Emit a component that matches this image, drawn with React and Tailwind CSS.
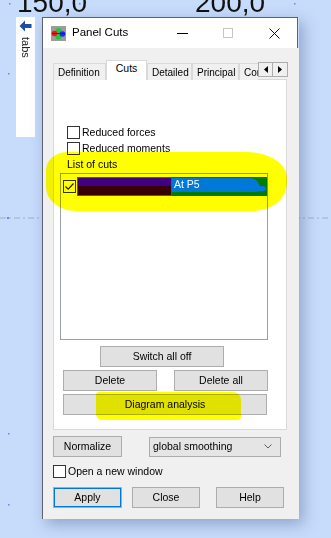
import React from "react";

const Box = ({ checked, clear }) => (
  <span
    className={`w-[13px] h-[13px] shrink-0 border border-[#333] flex items-center justify-center ${clear ? "bg-transparent" : "bg-white"}`}
  >
    {checked && (
      <svg width="11" height="11" viewBox="0 0 11 11">
        <path d="M1.5 5.5 4.2 8.2 9.5 2.5" fill="none" stroke="#222" strokeWidth="1.2" />
      </svg>
    )}
  </span>
);

const Btn = ({ children, className = "" }) => (
  <div
    className={`h-[21px] flex items-center justify-center bg-[#e1e1e1] border border-[#adadad] text-[10.5px] ${className}`}
  >
    {children}
  </div>
);

const Tab = ({ children, active, w }) =>
  active ? (
    <div
      className={`relative z-10 h-[20px] ${w} shrink-0 bg-white border border-b-0 border-[#d9d9d9] flex items-center justify-center pb-[3px] text-[10.5px]`}
    >
      {children}
    </div>
  ) : (
    <div
      className={`h-[17px] ${w} shrink-0 bg-[#f0f0f0] border border-b-0 border-[#d9d9d9] flex items-center pl-[4px] text-[10px] whitespace-nowrap overflow-hidden`}
    >
      {children}
    </div>
  );

export default function App() {
  const dots = [
    [9, 3], [79, 3], [238, 3], [294, 3],
    [8, 73], [8, 433], [8, 504],
  ];

  return (
    <div className="relative w-[331px] h-[538px] overflow-hidden bg-[#c7dbfb] font-['Liberation_Sans',Arial,sans-serif] text-black">
      {/* canvas grid */}
      <svg className="absolute inset-0" width="331" height="538">
        {dots.map(([x, y], i) => (
          <rect key={i} x={x} y={y} width="1.5" height="1.5" fill="#6f80f0" />
        ))}
        <line x1="0" y1="218" x2="331" y2="218" stroke="#a3adc2" strokeWidth="1" strokeDasharray="6 3 2 3" />
        <rect x="7" y="217" width="2" height="2" fill="#6f80f0" />
      </svg>

      {/* axis labels */}
      <div className="absolute left-[17px] top-[-11px] text-[28px] leading-none text-[#111]">150,0</div>
      <div className="absolute left-[195px] top-[-11px] text-[28px] leading-none text-[#111]">200,0</div>

      {/* tabs sidebar */}
      <div className="absolute left-[16px] top-[17px] w-[19px] h-[120px] bg-white flex flex-col items-center pt-[3px]">
        <svg width="13" height="12" viewBox="0 0 13 12">
          <path d="M0.5 6 6 0.5V4H12.5V8H6V11.5Z" fill="#1c4ea3" />
        </svg>
        <span className="[writing-mode:vertical-rl] text-[11px] leading-none mt-[5px] text-[#222]">tabs</span>
      </div>

      {/* dialog window */}
      <div className="absolute left-[42px] top-[17px] flex flex-col shadow-[4px_5px_14px_rgba(40,60,110,0.35)]">
        {/* title bar */}
        <div className="w-[256px] h-[31px] bg-white border-l border-t border-r border-[#5d6170] flex items-center">
          <svg className="ml-[8px]" width="15" height="15" viewBox="0 0 15 15">
            <rect width="15" height="15" fill="#9c9c9c" />
            <circle cx="7.5" cy="5" r="3" fill="#27c43a" />
            <circle cx="7.5" cy="10.5" r="3" fill="#27c43a" />
            <circle cx="3.5" cy="7.5" r="2.8" fill="#e81818" />
            <circle cx="11.5" cy="8" r="2.8" fill="#1a2fe0" />
            <path d="M1 7.5H14" stroke="#222" strokeWidth="0.8" />
          </svg>
          <span className="ml-[6px] text-[11.5px] text-black">Panel Cuts</span>
          <div className="ml-auto flex h-full">
            <div className="w-[46px] flex items-center justify-center">
              <span className="w-[11px] h-px bg-black" />
            </div>
            <div className="w-[46px] flex items-center justify-center">
              <span className="w-[10px] h-[10px] border border-[#c6c6c6]" />
            </div>
            <div className="w-[46px] flex items-center justify-center">
              <svg width="11" height="11" viewBox="0 0 11 11">
                <path d="M0.5 0.5 10.5 10.5M10.5 0.5 0.5 10.5" stroke="#111" strokeWidth="1" />
              </svg>
            </div>
          </div>
        </div>

        {/* content */}
        <div className="w-[257px] h-[471px] bg-[#f0f0f0] border-l border-[#5d6170] pl-[10px] pt-[12px]">
          {/* tab row */}
          <div className="flex items-end -mb-px relative z-10">
            <div className="w-[205px] flex items-end overflow-hidden">
              <Tab w="w-[53px]">Definition</Tab>
              <Tab w="w-[41px]" active>Cuts</Tab>
              <Tab w="w-[45px]">Detailed</Tab>
              <Tab w="w-[47px]">Principal</Tab>
              <Tab w="w-[40px]">Combinations</Tab>
            </div>
            <div className="self-start mt-[2px] flex">
              <div className="w-[15px] h-[15px] bg-[#f0f0f0] border border-[#adadad] flex items-center justify-center">
                <svg width="4" height="7" viewBox="0 0 4 7"><path d="M4 0V7L0 3.5Z" fill="#000" /></svg>
              </div>
              <div className="w-[15px] h-[15px] bg-[#f0f0f0] border border-l-0 border-[#adadad] flex items-center justify-center">
                <svg width="4" height="7" viewBox="0 0 4 7"><path d="M0 0V7L4 3.5Z" fill="#000" /></svg>
              </div>
            </div>
          </div>

          {/* tab panel */}
          <div className="relative w-[234px] h-[351px] bg-white border border-[#d9d9d9] pl-[6px] pt-[46px]">
            <div className="flex flex-col gap-[3px] pl-[7px]">
              <div className="flex items-center gap-[2px] h-[13px]">
                <Box />
                <span className="text-[10.5px] leading-none">Reduced forces</span>
              </div>
              <div className="flex items-center gap-[2px] h-[13px]">
                <Box />
                <span className="text-[10.5px] leading-none">Reduced moments</span>
              </div>
            </div>
            <div className="pl-[7px] mt-[3px] h-[15px] text-[10.5px] leading-[12px]">List of cuts</div>

            {/* highlight over the list */}
            <div className="absolute left-[-8px] top-[72px] w-[241px] h-[59px] bg-[#ffff00] mix-blend-multiply rounded-[22px_40px_34px_30px/18px_26px_28px_24px]" />

            {/* list box */}
            <div className="w-[208px] h-[167px] border border-[#9aa0a8] pt-[2px] pl-[2px]">
              <div className="flex items-center h-[20px]">
                <Box checked clear />
                <div className="relative ml-[1px] w-[96px] h-[19px] flex flex-col border border-[#555]">
                  <div className="flex-1 bg-[#400083]" />
                  <div className="flex-1 bg-[#3a0008]" />
                </div>
                <div className="relative w-[96px] h-[19px] bg-[#007d00]">
                  <div className="absolute left-0 top-[1px] w-[88px] h-[14px] bg-[#0078d7] rounded-r-[10px] rounded-br-[4px]" />
                  <div className="absolute left-[60px] top-[9px] w-[34px] h-[5px] bg-[#0078d7] rounded-[3px]" />
                  <span className="absolute left-[2px] top-[1px] text-[10.5px] leading-[12px] text-white">At P5</span>
                </div>
              </div>
            </div>

            <Btn className="w-[124px] ml-[40px] mt-[6px]">Switch all off</Btn>
            <div className="flex mt-[3px] ml-[3px] gap-[17px]">
              <Btn className="w-[94px]">Delete</Btn>
              <Btn className="w-[94px]">Delete all</Btn>
            </div>
            <div className="relative mt-[3px] ml-[3px] w-[204px]">
              <Btn className="w-[204px]">
                <span className="relative z-10">Diagram analysis</span>
              </Btn>
            </div>
            {/* highlight over the button */}
            <div className="absolute left-[42px] top-[312px] w-[145px] h-[28px] bg-[#ffff00] mix-blend-multiply rounded-[3px_8px_4px_6px]" />
          </div>

          {/* normalize row */}
          <div className="flex items-center mt-[6px]">
            <Btn className="w-[69px]">Normalize</Btn>
            <div className="ml-[27px] w-[132px] h-[20px] bg-[#e5e5e5] border border-[#acacac] flex items-center pl-[3px] pr-[8px] text-[10.5px]">
              <span>global smoothing</span>
              <svg className="ml-auto" width="8" height="5" viewBox="0 0 8 5">
                <path d="M0.5 0.5 4 4 7.5 0.5" fill="none" stroke="#606060" strokeWidth="1" />
              </svg>
            </div>
          </div>

          {/* open new window */}
          <div className="flex items-center gap-[2px] mt-[8px] h-[13px]">
            <Box />
            <span className="text-[10.5px] leading-none">Open a new window</span>
          </div>

          {/* bottom buttons */}
          <div className="flex mt-[9px]">
            <Btn className="w-[69px] border-[#0078d7] shadow-[inset_0_0_0_1px_#0078d7]">Apply</Btn>
            <Btn className="w-[68px] ml-[10px]">Close</Btn>
            <Btn className="w-[68px] ml-[16px]">Help</Btn>
          </div>
        </div>
      </div>
    </div>
  );
}
